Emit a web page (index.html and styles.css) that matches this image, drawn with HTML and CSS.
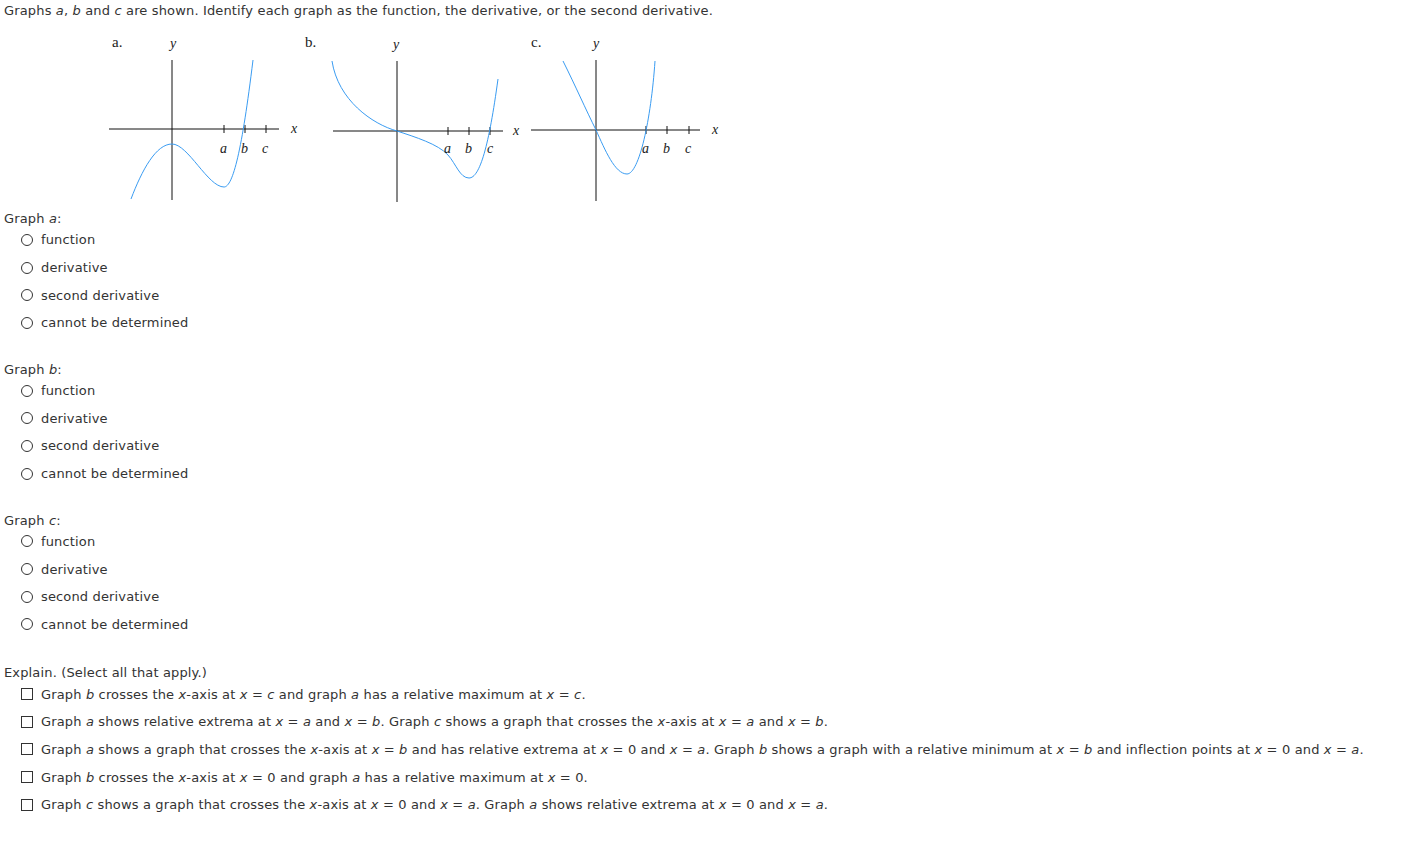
FILE: index.html
```html
<!DOCTYPE html>
<html>
<head>
<meta charset="utf-8">
<link rel="stylesheet" href="styles.css">
</head>
<body>
<p class="title">Graphs <i>a</i>, <i>b</i> and <i>c</i> are shown. Identify each graph as the function, the derivative, or the second derivative.</p>
<svg class="figure" width="630" height="175" viewBox="100 30 630 175">
  <g class="axes">
    <line x1="172" y1="60" x2="172" y2="200"/>
    <line x1="109" y1="129" x2="279" y2="129"/>
    <line x1="224" y1="125" x2="224" y2="133"/>
    <line x1="245" y1="125" x2="245" y2="133"/>
    <line x1="266" y1="125" x2="266" y2="133"/>
    <line x1="397" y1="61" x2="397" y2="202"/>
    <line x1="333" y1="131" x2="503" y2="131"/>
    <line x1="448" y1="127" x2="448" y2="135"/>
    <line x1="469" y1="127" x2="469" y2="135"/>
    <line x1="490" y1="127" x2="490" y2="135"/>
    <line x1="596" y1="60" x2="596" y2="201"/>
    <line x1="531" y1="130" x2="700" y2="130"/>
    <line x1="646" y1="126" x2="646" y2="134"/>
    <line x1="667" y1="126" x2="667" y2="134"/>
    <line x1="689" y1="126" x2="689" y2="134"/>
  </g>
  <g class="curves">
    <path d="M131,199 C142,170 156,144 172,144 C188,144 208,187 224,187 C233,187 242,150 253,60"/>
    <path d="M332,61 C338,100 372,124 397,131 C415,137 438,144 448,155 C456,164 460,178 469,178 C480,178 489,145 498,79"/>
    <path d="M563,61 C575,85 586,110 596,130 C605,150 615,174 627,174 C639,174 651,120 655,61"/>
  </g>
  <g class="lbl">
    <text class="up" x="112" y="47">a.</text>
    <text x="170" y="48">y</text>
    <text x="291" y="133">x</text>
    <text x="220" y="153">a</text>
    <text x="241" y="153">b</text>
    <text x="262" y="153">c</text>
    <text class="up" x="305" y="47">b.</text>
    <text x="393" y="49">y</text>
    <text x="513" y="135">x</text>
    <text x="444" y="153">a</text>
    <text x="465" y="153">b</text>
    <text x="487" y="153">c</text>
    <text class="up" x="531" y="47">c.</text>
    <text x="593" y="48">y</text>
    <text x="712" y="134">x</text>
    <text x="642" y="153">a</text>
    <text x="663" y="153">b</text>
    <text x="685" y="153">c</text>
  </g>
</svg>

<div class="group">
  <div class="head">Graph <i>a</i>:</div>
  <div class="opt"><span class="radio"></span><span>function</span></div>
  <div class="opt"><span class="radio"></span><span>derivative</span></div>
  <div class="opt"><span class="radio"></span><span>second derivative</span></div>
  <div class="opt"><span class="radio"></span><span>cannot be determined</span></div>
</div>
<div class="group">
  <div class="head">Graph <i>b</i>:</div>
  <div class="opt"><span class="radio"></span><span>function</span></div>
  <div class="opt"><span class="radio"></span><span>derivative</span></div>
  <div class="opt"><span class="radio"></span><span>second derivative</span></div>
  <div class="opt"><span class="radio"></span><span>cannot be determined</span></div>
</div>
<div class="group">
  <div class="head">Graph <i>c</i>:</div>
  <div class="opt"><span class="radio"></span><span>function</span></div>
  <div class="opt"><span class="radio"></span><span>derivative</span></div>
  <div class="opt"><span class="radio"></span><span>second derivative</span></div>
  <div class="opt"><span class="radio"></span><span>cannot be determined</span></div>
</div>
<div class="group explain">
  <div class="head">Explain. (Select all that apply.)</div>
  <div class="opt"><span class="check"></span><span>Graph <i>b</i> crosses the <i>x</i>-axis at <i>x</i> = <i>c</i> and graph <i>a</i> has a relative maximum at <i>x</i> = <i>c</i>.</span></div>
  <div class="opt"><span class="check"></span><span>Graph <i>a</i> shows relative extrema at <i>x</i> = <i>a</i> and <i>x</i> = <i>b</i>. Graph <i>c</i> shows a graph that crosses the <i>x</i>-axis at <i>x</i> = <i>a</i> and <i>x</i> = <i>b</i>.</span></div>
  <div class="opt"><span class="check"></span><span>Graph <i>a</i> shows a graph that crosses the <i>x</i>-axis at <i>x</i> = <i>b</i> and has relative extrema at <i>x</i> = 0 and <i>x</i> = <i>a</i>. Graph <i>b</i> shows a graph with a relative minimum at <i>x</i> = <i>b</i> and inflection points at <i>x</i> = 0 and <i>x</i> = <i>a</i>.</span></div>
  <div class="opt"><span class="check"></span><span>Graph <i>b</i> crosses the <i>x</i>-axis at <i>x</i> = 0 and graph <i>a</i> has a relative maximum at <i>x</i> = 0.</span></div>
  <div class="opt"><span class="check"></span><span>Graph <i>c</i> shows a graph that crosses the <i>x</i>-axis at <i>x</i> = 0 and <i>x</i> = <i>a</i>. Graph <i>a</i> shows relative extrema at <i>x</i> = 0 and <i>x</i> = <i>a</i>.</span></div>
</div>
</body>
</html>
```

FILE: styles.css
```css
html, body {
  margin: 0;
  padding: 0;
  background: #fff;
}
body {
  padding: 4px 0 0 4px;
  font-family: "DejaVu Sans", Verdana, sans-serif;
  font-size: 13px;
  letter-spacing: 0.15px;
  color: #333;
}
.title {
  margin: 0;
  height: 14px;
  line-height: 14px;
  white-space: nowrap;
}
.figure {
  display: block;
  margin: 12px 0 0 96px;
}
.axes line {
  stroke: #111;
  stroke-width: 1;
}
.curves path {
  fill: none;
  stroke: #3a9cf2;
  stroke-width: 1;
}
.lbl text {
  font-family: "Liberation Serif", "Times New Roman", serif;
  font-style: italic;
  font-size: 14px;
  letter-spacing: 0;
  fill: #222;
}
.lbl text.up {
  font-style: normal;
  font-size: 15px;
}
.group {
  margin-top: 7px;
}
.group + .group {
  margin-top: 26px;
}
.group + .group.explain {
  margin-top: 28px;
}
.head {
  height: 14px;
  line-height: 14px;
  white-space: nowrap;
}
.opt {
  display: flex;
  align-items: center;
  height: 27.7px;
  padding-left: 17px;
  white-space: nowrap;
}
.radio {
  width: 10px;
  height: 10px;
  border: 1px solid #333;
  border-radius: 50%;
  margin-right: 8px;
  flex: none;
}
.check {
  width: 10px;
  height: 10px;
  border: 1px solid #333;
  margin-right: 8px;
  flex: none;
}
```
